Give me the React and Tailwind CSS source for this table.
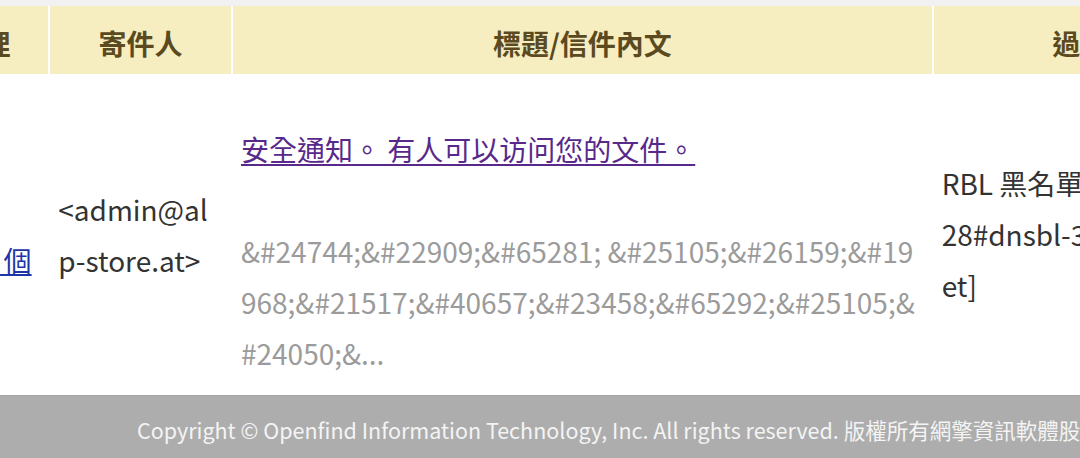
import React from 'react';

const cjk = { fontFamily: '"Noto Sans CJK TC", "Noto Sans", sans-serif' };

export default function App() {
  return (
    <div className="w-[1080px] h-[458px] overflow-hidden bg-white flex flex-col" style={cjk}>
      <div className="h-[6px] bg-[#f1f1f1] shrink-0" />
      <div className="shrink-0 overflow-hidden">
        <table className="table-fixed border-separate border-spacing-x-[2px] border-spacing-y-0 ml-[-85px] w-[1370px]">
          <colgroup>
            <col className="w-[130px]" />
            <col className="w-[179px]" />
            <col className="w-[692px]" />
            <col className="w-[346px]" />
          </colgroup>
          <thead>
            <tr className="h-[68px] bg-[#f6eec0] text-[#5b4a1f] text-[28px] font-bold">
              <th className="px-[8px] pt-[5px] font-bold">處理</th>
              <th className="px-[8px] pt-[5px] font-bold">寄件人</th>
              <th className="px-[8px] pt-[5px] font-bold">標題/信件內文</th>
              <th className="px-[8px] pt-[5px] font-bold">過濾原因</th>
            </tr>
          </thead>
          <tbody className="text-[28px] leading-[51px] text-[#333]">
            <tr>
              <td className="pl-[15px] pr-[8px] align-middle whitespace-nowrap">
                附件<br />
                <a href="#" className="text-[#1d35a8] underline">共 12 個</a>
              </td>
              <td className="px-[8px] align-middle break-all">
                &lt;admin@alp-store.at&gt;
              </td>
              <td className="px-[8px] pt-[50px] pb-[16px] align-middle break-all">
                <a href="#" className="text-[#58298a] underline underline-offset-[3px]">
                  安全通知。 有人可以访问您的文件。
                </a>
                <br />
                <br />
                <span className="text-[#9b9b9b]">
                  &amp;#24744;&amp;#22909;&amp;#65281; &amp;#25105;&amp;#26159;&amp;#19968;&amp;#21517;&amp;#40657;&amp;#23458;&amp;#65292;&amp;#25105;&amp;#24050;&amp;...
                </span>
              </td>
              <td className="px-[8px] align-middle whitespace-nowrap">
                RBL 黑名單 [91.203.5.1<br />
                28#dnsbl-3.uceprotect.n<br />
                et]
              </td>
            </tr>
          </tbody>
        </table>
      </div>
      <div className="h-[72px] shrink-0 bg-[#adadad] border-t border-[#a4a4a4] flex items-center pl-[137px] pb-[3px] whitespace-nowrap text-[21.5px] text-[#f4f4f4]">
        Copyright © Openfind Information Technology, Inc. All rights reserved. 版權所有網擎資訊軟體股份有限公司
      </div>
    </div>
  );
}
